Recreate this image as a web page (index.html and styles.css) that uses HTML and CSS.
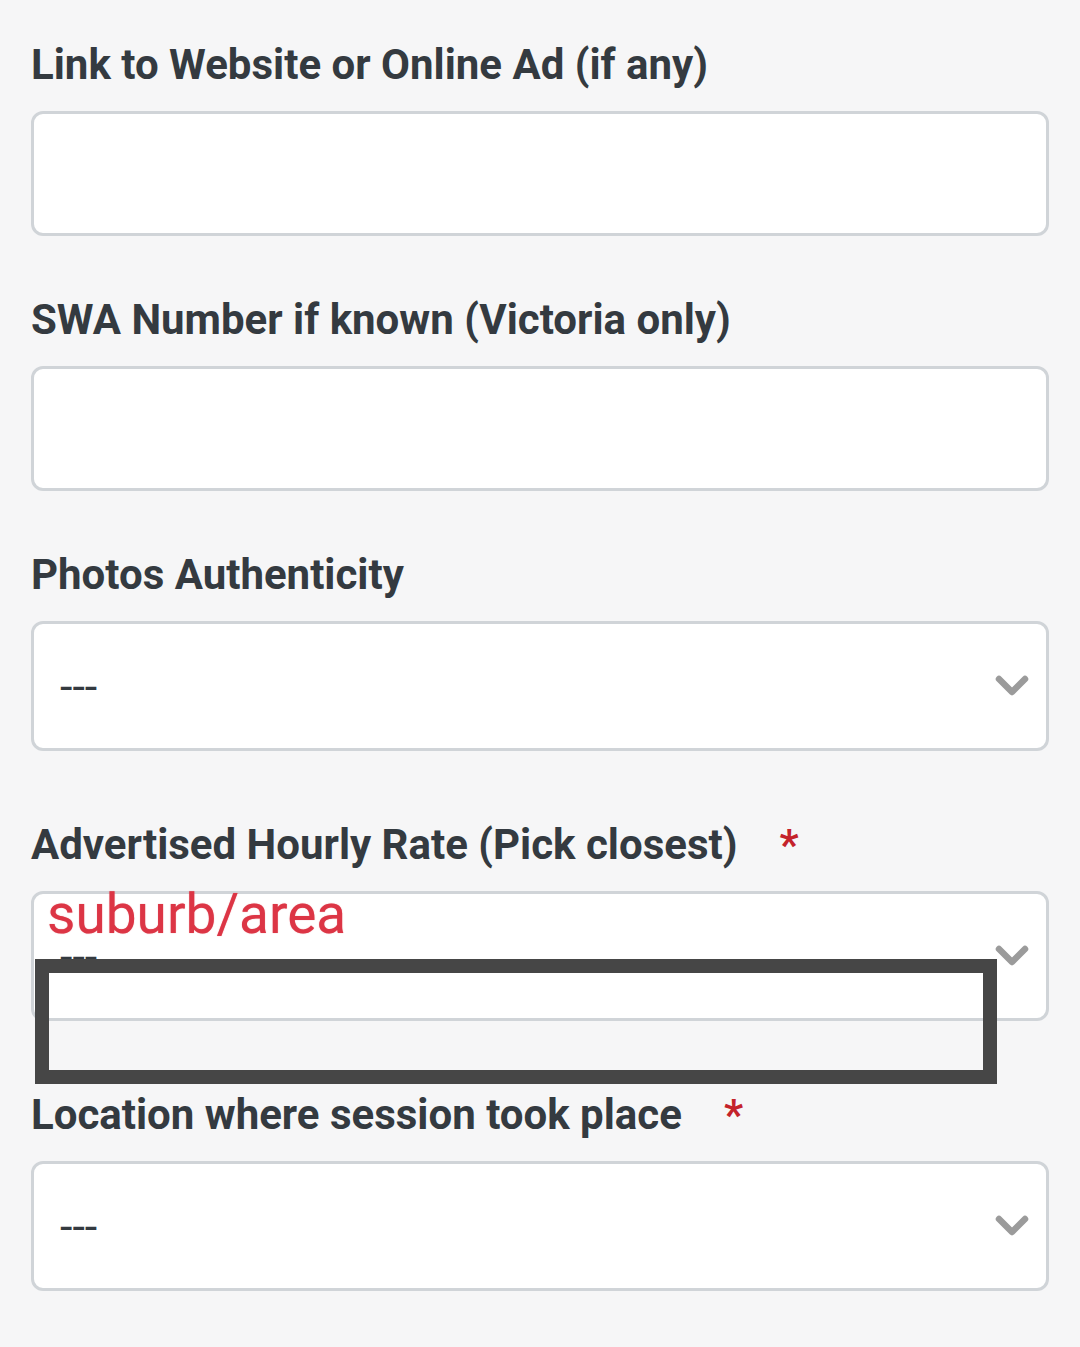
FILE: index.html
```html
<!DOCTYPE html>
<html lang="en">
<head>
<meta charset="utf-8">
<title>Form</title>
<link rel="stylesheet" href="styles.css">
</head>
<body>
<form class="form">
  <div class="field">
    <label class="label">Link to Website or Online Ad (if any)</label>
    <div class="control input"></div>
  </div>
  <div class="field">
    <label class="label">SWA Number if known (Victoria only)</label>
    <div class="control input"></div>
  </div>
  <div class="field">
    <label class="label">Photos Authenticity</label>
    <div class="control select">
      <span class="value">---</span>
      <svg class="chevron" viewBox="0 0 36 24" width="36" height="24"><path d="M5 5 L18 18 L31 5" fill="none" stroke="#9b9b9b" stroke-width="6.5" stroke-linecap="round" stroke-linejoin="round"/></svg>
    </div>
  </div>
  <div class="field">
    <label class="label required">Advertised Hourly Rate (Pick closest)<span class="star">*</span></label>
    <div class="control select">
      <span class="value">---</span>
      <svg class="chevron" viewBox="0 0 36 24" width="36" height="24"><path d="M5 5 L18 18 L31 5" fill="none" stroke="#9b9b9b" stroke-width="6.5" stroke-linecap="round" stroke-linejoin="round"/></svg>
    </div>
  </div>
  <div class="field">
    <label class="label required">Location where session took place<span class="star">*</span></label>
    <div class="control select">
      <span class="value">---</span>
      <svg class="chevron" viewBox="0 0 36 24" width="36" height="24"><path d="M5 5 L18 18 L31 5" fill="none" stroke="#9b9b9b" stroke-width="6.5" stroke-linecap="round" stroke-linejoin="round"/></svg>
    </div>
  </div>
</form>
<div class="note">suburb/area</div>
<div class="mark"></div>
</body>
</html>
```
FILE: styles.css
```css
html, body {
  margin: 0;
  padding: 0;
  background: #f6f6f7;
}
body {
  position: relative;
  width: 1080px;
  height: 1347px;
  overflow: hidden;
  font-family: Roboto, "Liberation Sans", sans-serif;
  color: #343a40;
}
.form {
  display: flex;
  flex-direction: column;
  gap: 59px;
  padding: 40px 31px 0 31px;
}
.field {
  display: flex;
  flex-direction: column;
}
.label {
  display: block;
  font-size: 42px;
  font-weight: 700;
  line-height: 50px;
  margin-bottom: 21px;
  letter-spacing: 0;
}
.label.required {
  padding-top: 10px;
}
.star {
  color: #c4232b;
  margin-left: 42px;
  font-weight: 700;
}
.control {
  box-sizing: border-box;
  background: #ffffff;
  border: 3px solid #d0d4d8;
  border-radius: 12px;
}
.input {
  height: 125px;
}
.select {
  height: 130px;
  display: flex;
  align-items: center;
  justify-content: space-between;
  padding: 0 16px 0 26px;
}
.value {
  font-size: 45px;
  line-height: 1;
  color: #343a40;
}
.chevron {
  display: block;
}
.note {
  position: absolute;
  left: 47px;
  top: 884px;
  font-size: 55px;
  line-height: 60px;
  color: #dc3545;
  text-shadow: 0 0 1px rgba(220, 53, 69, 0.6);
}
.mark {
  position: absolute;
  left: 35px;
  top: 959px;
  width: 962px;
  height: 125px;
  box-sizing: border-box;
  border: 14px solid #464646;
}
```
